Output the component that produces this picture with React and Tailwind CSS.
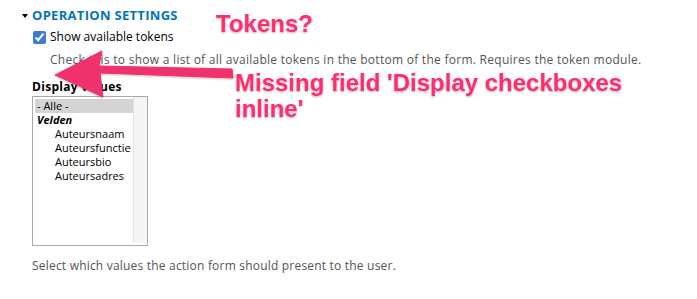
import React from 'react';

export default function App() {
  const fields = ['Auteursnaam', 'Auteursfunctie', 'Auteursbio', 'Auteursadres'];

  return (
    <div className="relative h-[299px] w-[697px] overflow-hidden bg-white font-['Open_Sans',sans-serif] text-[12px] text-[#333]">
      {/* Form */}
      <div className="pl-[22px] pt-[8px]">
        <div className="flex h-[16px] items-center gap-[4px]">
          <span className="h-0 w-0 border-x-[3px] border-t-[4px] border-x-transparent border-t-black" />
          <span className="text-[13px] font-bold uppercase tracking-[0.3px] text-[#0074bd]">Operation settings</span>
        </div>

        <div className="ml-[11px] mt-[5px] flex h-[16px] items-center gap-[4px]">
          <input type="checkbox" defaultChecked className="m-0 h-[13px] w-[13px] accent-[#3d7ad6]" />
          <label className="text-[12px] text-black">Show available tokens</label>
        </div>
        <p className="ml-[28px] mt-[7px] leading-[16px] tracking-[0.27px] text-[#555]">
          Check this to show a list of all available tokens in the bottom of the form. Requires the token module.
        </p>

        <div className="ml-[10px] mt-[11px]">
          <div className="text-[12px] font-bold leading-[16px] tracking-[0.3px] text-black">Display values</div>
          <div className="mt-[1px] flex h-[150px] w-[116px] border border-[#aaa] bg-white p-[2px] pr-0">
            <div className="flex-1 text-[11px] leading-[14px] text-black">
              <div className="bg-[#d4d4d4] pl-[2px]">- Alle -</div>
              <div className="pl-[2px] font-bold italic">Velden</div>
              {fields.map((f) => (
                <div key={f} className="overflow-hidden whitespace-nowrap pl-[20px]">{f}</div>
              ))}
            </div>
            <div className="-mt-[2px] w-[14px] border-l border-[#e2e2e2] bg-[#f5f5f5]" />
          </div>
          <p className="mt-[12px] leading-[16px] tracking-[0.2px] text-[#555]">
            Select which values the action form should present to the user.
          </p>
        </div>
      </div>

      {/* Annotations */}
      <svg className="absolute left-0 top-0" width="697" height="299" viewBox="0 0 697 299">
        <defs>
          <filter id="sh" x="-10%" y="-10%" width="120%" height="130%">
            <feDropShadow dx="0" dy="1" stdDeviation="1" floodColor="#000" floodOpacity="0.25" />
          </filter>
        </defs>
        <path
          d="M55 75 L102 51 L99 66 L232 69 L233 78 L100 73 L103 97 Z"
          fill="#f0306c"
          stroke="#f0306c"
          strokeWidth="1"
          strokeLinejoin="round"
          filter="url(#sh)"
        />
      </svg>
      <div className="absolute left-[216px] top-[6px] font-['Liberation_Sans',Arial,sans-serif] text-[24px] font-bold text-[#ff2d6f] [text-shadow:0_0_2px_#fff,0_1px_2px_rgba(0,0,0,0.35)]">
        Tokens?
      </div>
      <div className="absolute left-[235px] top-[70px] font-['Liberation_Sans',Arial,sans-serif] text-[24px] font-bold leading-[26px] text-[#ff2d6f] [text-shadow:0_0_2px_#fff,0_1px_2px_rgba(0,0,0,0.35)]">
        Missing field 'Display checkboxes
        <br />
        inline'
      </div>
    </div>
  );
}
